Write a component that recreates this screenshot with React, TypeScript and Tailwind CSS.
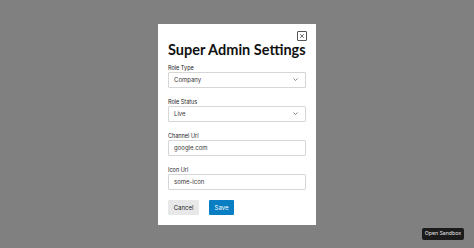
import React from "react";

const fieldBox =
  "h-4 w-full border border-[#d6d6d6] rounded-[1px] bg-white px-[5px] text-[6px] text-[#333] flex items-center";

const Field = ({ label, children }: { label: string; children: React.ReactNode }) => (
  <div className="flex flex-col">
    <label className="text-[5.5px] leading-[6px] text-[#222] mb-[1px]">{label}</label>
    {children}
  </div>
);

const Select = ({ value }: { value: string }) => (
  <div className={fieldBox + " justify-between"}>
    <span>{value}</span>
    <svg width="5" height="3" viewBox="0 0 10 6" className="mr-[2px]">
      <path d="M1 1l4 4 4-4" fill="none" stroke="#666" strokeWidth="1.5" />
    </svg>
  </div>
);

export default function App() {
  return (
    <div
      className="relative w-[474px] h-[248px] bg-[#808080] flex items-center justify-center overflow-hidden"
      style={{ fontFamily: "Inter, 'Liberation Sans', sans-serif" }}
    >
      <div className="w-[158px] h-[201px] bg-white px-[10px] pt-[7px] pb-[9px] flex flex-col">
        <div className="flex justify-end -mr-[1px]">
          <button className="w-[10px] h-[10px] border border-[#555] rounded-[1px] flex items-center justify-center">
            <svg width="6" height="6" viewBox="0 0 10 10">
              <path d="M2 2l6 6M8 2l-6 6" stroke="#444" strokeWidth="1.3" />
            </svg>
          </button>
        </div>
        <h2
          className="text-[14.5px] leading-[18px] font-bold text-[#111] whitespace-nowrap"
          style={{ fontFamily: "Lato, 'Liberation Sans', sans-serif" }}
        >
          Super Admin Settings
        </h2>
        <div className="flex flex-col gap-[11px] mt-[6px]">
          <Field label="Role Type">
            <Select value="Company" />
          </Field>
          <Field label="Role Status">
            <Select value="Live" />
          </Field>
          <Field label="Channel Url">
            <div className={fieldBox}>google.com</div>
          </Field>
          <Field label="Icon Url">
            <div className={fieldBox}>some-icon</div>
          </Field>
        </div>
        <div className="flex gap-[10px] mt-[10px]">
          <button className="w-[31px] h-[15px] bg-[#e8e8e8] text-[6px] text-[#222] rounded-[1px]">
            Cancel
          </button>
          <button className="w-[25px] h-[15px] bg-[#0a7ec2] text-[6px] text-white rounded-[1px]">
            Save
          </button>
        </div>
      </div>
      <div className="absolute right-[10px] bottom-[8px] h-[12px] px-[3px] bg-[#1b1b1b] text-[#e8e8e8] text-[5.2px] flex items-center rounded-[2px]">
        Open Sandbox
      </div>
    </div>
  );
}
